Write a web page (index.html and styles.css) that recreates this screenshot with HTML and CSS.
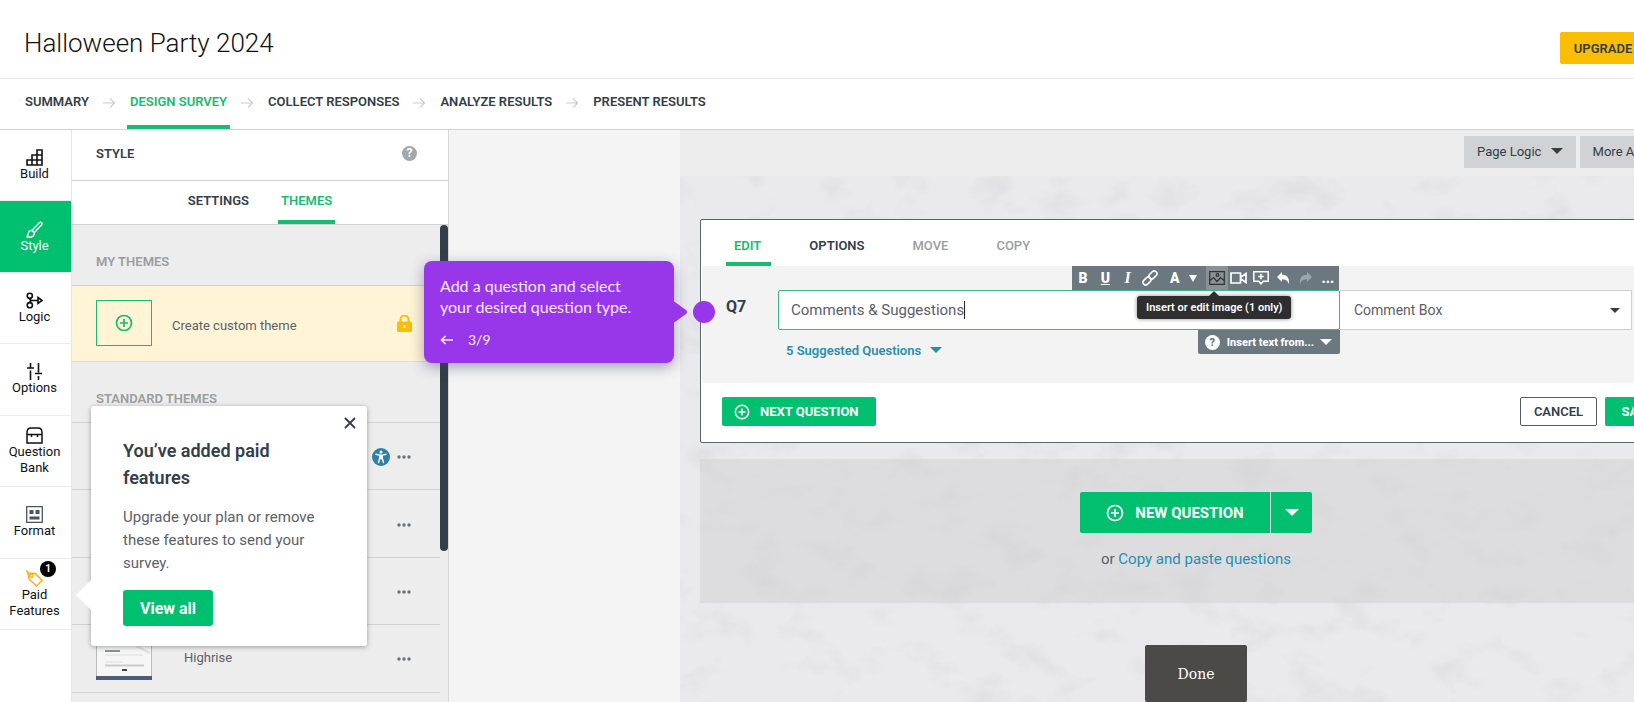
FILE: index.html
```html
<!DOCTYPE html>
<html lang="en">
<head>
<meta charset="utf-8">
<title>Halloween Party 2024</title>
<link rel="stylesheet" href="styles.css">
</head>
<body>
<svg class="defs" width="0" height="0" aria-hidden="true">
  <symbol id="plus-circle" viewBox="0 0 18 18"><circle cx="9" cy="9" r="7.5" fill="none" stroke="currentColor" stroke-width="1.7"/><path d="M9 5v8M5 9h8" stroke="currentColor" stroke-width="1.7"/></symbol>
  <symbol id="caret" viewBox="0 0 12 6"><path d="M0 0h12L6 6z" fill="currentColor"/></symbol>
  <symbol id="next" viewBox="0 0 14 12"><path d="M0 6h12M7.500 1l5 5-5 5" fill="none" stroke="currentColor" stroke-width="1.200"/></symbol>
  <symbol id="dots" viewBox="0 0 14 4"><circle cx="2" cy="2" r="1.700" fill="currentColor"/><circle cx="7" cy="2" r="1.700" fill="currentColor"/><circle cx="12" cy="2" r="1.700" fill="currentColor"/></symbol>
</svg>
<div class="app">
  <header class="topbar">
    <h1 class="survey-title">Halloween Party 2024</h1>
    <button class="upgrade">UPGRADE</button>
  </header>
  <nav class="steps" aria-label="Survey steps">
    <a class="step" href="#">SUMMARY</a>
    <svg class="step-arrow"><use href="#next"/></svg>
    <a class="step current" href="#">DESIGN SURVEY</a>
    <svg class="step-arrow"><use href="#next"/></svg>
    <a class="step" href="#">COLLECT RESPONSES</a>
    <svg class="step-arrow"><use href="#next"/></svg>
    <a class="step" href="#">ANALYZE RESULTS</a>
    <svg class="step-arrow"><use href="#next"/></svg>
    <a class="step" href="#">PRESENT RESULTS</a>
  </nav>

  <div class="body">
    <nav class="rail" aria-label="Design tools">
      <div class="rail-list">
      <a class="rail-item" href="#">
        <svg class="rail-icon" viewBox="0 0 17 17" fill="none" stroke="currentColor" stroke-width="1.600"><path d="M1 11h15v5H1zM6 6h10v10H6zM11 1h5v15h-5z"/></svg>
        <span>Build</span></a>
      <a class="rail-item active" href="#">
        <svg class="rail-icon" viewBox="0 0 17 17" fill="none" stroke="currentColor" stroke-width="1.400" stroke-linejoin="round"><path d="M6 9.500 13.500 1.600c1.500-1.200 3.300.6 2.200 2.100L8.200 11.800zM6 9.500c-2-.3-3.500.8-3.600 2.800-.1 1.500-.6 2.300-1.600 3.500 3 .8 6.600.4 7.300-2 .2-.7.200-1.300.1-2z"/></svg>
        <span>Style</span></a>
      <a class="rail-item" href="#">
        <svg class="rail-icon" viewBox="0 0 17 17" fill="none" stroke="currentColor" stroke-width="1.600"><circle cx="3.800" cy="3.800" r="2.600"/><circle cx="3.800" cy="13.200" r="2.600"/><path d="M3.800 6.400c0 1.400 1 2.100 2.800 2.100H12M3.800 10.600c0-1.400 1-2.100 2.800-2.100M12 5.500l4 3-4 3z"/></svg>
        <span>Logic</span></a>
      <a class="rail-item" href="#">
        <svg class="rail-icon" viewBox="0 0 17 17" fill="none" stroke="currentColor" stroke-width="1.600"><path d="M4.500 0v5M4.500 7.500V17M1 5h7M12.500 0v9.500M12.500 13v4M9 10.500h7"/></svg>
        <span>Options</span></a>
      <a class="rail-item" href="#">
        <svg class="rail-icon" viewBox="0 0 17 17" fill="none" stroke="currentColor" stroke-width="1.500"><path d="M1 16V5.500C1 2.500 3 1 5 1h7c2 0 4 1.500 4 4.500V16zM1 7.500h15M5.500 7.500V10M11.500 7.500V10"/></svg>
        <span>Question Bank</span></a>
      <a class="rail-item" href="#">
        <svg class="rail-icon slate" viewBox="0 0 17 17" fill="none" stroke="currentColor" stroke-width="1.300"><path d="M.7.7h15.600v15.600H.7z"/><path d="M3.500 4h4v4h-4zM9.500 4h4v4h-4zM3.500 10.500h10v3h-10z" fill="currentColor" stroke="none"/></svg>
        <span>Format</span></a>
      <a class="rail-item" href="#">
        <span class="tag-wrap">
          <svg class="rail-icon gold" viewBox="0 0 17 17" fill="none" stroke="currentColor" stroke-width="1.500" stroke-linejoin="round"><path d="M2 3l7.500.5 6.500 7-5.500 5.500L3 9zM0 .500l5 4.500"/><circle cx="5.500" cy="5.800" r="1.700"/></svg>
          <b class="badge">1</b>
        </span>
        <span>Paid Features</span></a>
      </div>
    </nav>

    <aside class="panel">
      <div class="panel-head"><h2 class="panel-title">STYLE</h2><button class="help" aria-label="Help">?</button></div>
      <div class="panel-tabs"><a class="ptab" href="#">SETTINGS</a><a class="ptab current" href="#">THEMES</a></div>
      <div class="panel-scroll">
        <div class="themes">
          <h3 class="group">MY THEMES</h3>
          <div class="custom">
            <button class="custom-add" aria-label="Add theme"><svg class="icon18"><use href="#plus-circle"/></svg></button>
            <span class="custom-name">Create custom theme</span>
            <svg class="lock" viewBox="0 0 15 17"><path d="M3.500 8V4.500a4 4 0 0 1 8 0V8" fill="none" stroke="#f9be00" stroke-width="2"/><rect y="6.500" width="15" height="10.500" rx="1.500" fill="#f9be00"/><path d="M7.500 10v3" stroke="#fff" stroke-width="1.500"/></svg>
          </div>
          <h3 class="group">STANDARD THEMES</h3>
          <div class="theme-list">
          <div class="theme">
            <svg class="access" viewBox="0 0 18 18"><circle cx="9" cy="9" r="9" fill="#2a7fab"/><circle cx="9" cy="4" r="1.500" fill="#fff"/><path d="M4 6.300l3.500.8h3l3.500-.8M7.700 7.200v3L6.500 14.500M10.300 7.200v3l1.200 4.300M9 7v4" fill="none" stroke="#fff" stroke-width="1.400" stroke-linecap="round"/></svg>
            <button class="more" aria-label="More"><svg class="dots"><use href="#dots"/></svg></button></div>
          <div class="theme"><button class="more" aria-label="More"><svg class="dots"><use href="#dots"/></svg></button></div>
          <div class="theme"><button class="more" aria-label="More"><svg class="dots"><use href="#dots"/></svg></button></div>
          <div class="theme">
            <svg class="thumb" viewBox="0 12 56 42"><path d="M.5 12.500h55v41H.500z" fill="#f6f6f6" stroke="#bbb"/><path d="M40 20l14 7" stroke="#e2e2e2" stroke-width="2"/><path d="M9 25h15" stroke="#8b90a0" stroke-width="2"/><path d="M9 29h38M9 36h18" stroke="#ddd"/><path d="M9 39.500h39" stroke="#ccc" stroke-width="2"/><path d="M26 44h5" stroke="#444" stroke-width="2"/><path d="M0 50h56v4H0z" fill="#4b5c80"/></svg>
            <span class="theme-name">Highrise</span>
            <button class="more" aria-label="More"><svg class="dots"><use href="#dots"/></svg></button></div>
          <div class="theme"></div>
          </div>
        </div>
        <div class="scroll-track"><div class="scroll-thumb"></div></div>
      </div>
    </aside>

    <main class="workspace">
      <div class="survey">
        <div class="page-bar">
          <button class="page-btn">Page Logic <svg class="caret12"><use href="#caret"/></svg></button>
          <button class="page-btn">More Actions <svg class="caret12"><use href="#caret"/></svg></button>
        </div>
        <div class="sheet">
          <svg class="concrete" aria-hidden="true">
            <filter id="smudge" x="0" y="0" width="100%" height="100%"><feTurbulence type="fractalNoise" baseFrequency="0.02 0.028" numOctaves="7" seed="21"/><feColorMatrix values="0 0 0 0 .64  0 0 0 0 .64  0 0 0 0 .66  1.200 0 0 0 -.620"/></filter>
            <rect width="100%" height="100%" filter="url(#smudge)"/>
          </svg>
          <section class="card">
            <div class="card-tabs"><a class="ctab current" href="#">EDIT</a><a class="ctab" href="#">OPTIONS</a><a class="ctab off" href="#">MOVE</a><a class="ctab off" href="#">COPY</a></div>
            <div class="editor">
              <label class="qnum" for="question">Q7</label>
              <div class="question">
                <div class="field"><input id="question" class="field-input" type="text" value="Comments &amp; Suggestions"><span class="cursor"></span></div>
                <div class="format-bar">
                  <button class="fmt bold" aria-label="Bold">B</button>
                  <button class="fmt bold under" aria-label="Underline">U</button>
                  <button class="fmt ital" aria-label="Italic">I</button>
                  <button class="fmt" aria-label="Link"><svg viewBox="0 0 16 16" width="16" height="16" fill="none" stroke="currentColor" stroke-width="1.600"><rect x="6.500" y="2.200" width="9" height="5.400" rx="2.700" transform="rotate(-45 11 5)"/><rect x=".500" y="8.300" width="9" height="5.400" rx="2.700" transform="rotate(-45 5 11)"/></svg></button>
                  <button class="fmt wide bold" aria-label="Text color">A <svg width="8" height="7" viewBox="0 0 8 7"><path d="M0 0h8L4 7z" fill="currentColor"/></svg></button>
                  <button class="fmt pressed" aria-label="Insert image"><svg viewBox="0 0 16 14" width="16" height="14" fill="none" stroke="currentColor" stroke-width="1.200"><path d="M.7.700h14.600v12.600H.700zM1 9.500l3.500-3 3.500 4 3.500-4 3.500 3"/><circle cx="8.500" cy="4" r="1.400"/></svg></button>
                  <button class="fmt" aria-label="Insert video"><svg viewBox="0 0 17 12" width="17" height="12" fill="none" stroke="currentColor" stroke-width="1.700"><path d="M1 1h9.500v10H1zM11 5l5-3.500v9L11 7"/></svg></button>
                  <button class="fmt" aria-label="Insert comment"><svg viewBox="0 0 16 14" width="16" height="14" fill="none" stroke="currentColor" stroke-width="1.500"><path d="M.8.800h14.400v9.400h-5L8 12.800l-2.200-2.600h-5zM8 2.800v5.400M5.300 5.500h5.400"/></svg></button>
                  <button class="fmt" aria-label="Undo"><svg viewBox="0 0 13 12" width="13" height="12"><path d="M5 0v2.800c5 0 7.500 3 7 9.200-1.500-3.500-3.500-4.800-7-4.800V10L0 5z" fill="currentColor"/></svg></button>
                  <button class="fmt dim" aria-label="Redo"><svg viewBox="0 0 13 12" width="13" height="12"><path d="M8 0v2.800c-5 0-7.500 3-7 9.200 1.500-3.500 3.500-4.800 7-4.800V10l5-5z" fill="currentColor"/></svg></button>
                  <button class="fmt bold" aria-label="More">...</button>
                </div>
                <div class="hint" role="tooltip">Insert or edit image (1 only)</div>
                <button class="insert-text"><span class="q">?</span>Insert text from...<svg class="caret12"><use href="#caret"/></svg></button>
                <button class="suggested">5 Suggested Questions <svg class="caret12"><use href="#caret"/></svg></button>
              </div>
              <div class="type"><select class="type-select" aria-label="Question type"><option>Comment Box</option></select><svg class="type-caret"><use href="#caret"/></svg></div>
            </div>
            <div class="card-foot">
              <button class="next-q"><svg class="icon16"><use href="#plus-circle"/></svg>NEXT QUESTION</button>
              <button class="cancel">CANCEL</button>
              <button class="save">SAVE</button>
            </div>
          </section>
          <section class="add-zone">
            <div class="split"><button class="new-q"><svg class="icon18"><use href="#plus-circle"/></svg>NEW QUESTION</button><button class="new-more" aria-label="Question types"><svg class="caret14"><use href="#caret"/></svg></button></div>
            <p class="copy-line">or <a class="copy-link" href="#">Copy and paste questions</a></p>
          </section>
          <button class="done">Done</button>
        </div>
      </div>
    </main>
  </div>

  <div class="paid-pop" role="dialog" aria-labelledby="paid-title">
    <button class="pop-close" aria-label="Close"><svg width="12" height="12" viewBox="0 0 12 12"><path d="M1 1l10 10M11 1L1 11" stroke="currentColor" stroke-width="1.800"/></svg></button>
    <h2 id="paid-title" class="pop-title">You’ve added paid features</h2>
    <p class="pop-text">Upgrade your plan or remove these features to send your survey.</p>
    <button class="view-all">View all</button>
  </div>
  <div class="tour" role="dialog" aria-label="Tour">
    <p class="tour-text">Add a question and select<br>your desired question type.</p>
    <div class="tour-nav"><button class="tour-back" aria-label="Back"><svg width="13" height="10" viewBox="0 0 13 10"><path d="M13 5H1.500M5.500 1l-4 4 4 4" fill="none" stroke="currentColor" stroke-width="1.600"/></svg></button><span>3/9</span></div>
    <svg class="tour-tip" viewBox="0 0 14 22"><path d="M0 0l12.500 9q2 2 0 4L0 22z" fill="#9837ea"/></svg>
    <span class="tour-dot"></span>
  </div>
</div>
</body>
</html>
```
FILE: styles.css
```css
* { box-sizing: border-box; }
body { margin: 0; background: #fff; color: #333e48; font-family: Roboto, "Liberation Sans", sans-serif; font-size: 13px; overflow: hidden; }
button { font: inherit; color: inherit; background: none; border: 0; padding: 0; margin: 0; }
a { color: inherit; text-decoration: none; }
h1, h2, h3, p { margin: 0; }
.defs { position: absolute; }
.app { position: relative; display: flex; flex-direction: column; min-width: 1712px; height: 100vh; overflow: hidden; }

.topbar { display: flex; flex: none; justify-content: space-between; align-items: flex-end; height: 79px; padding: 0 64px 14px 24px; border-bottom: 1px solid #ececec; }
.survey-title { padding-bottom: 4px; font-size: 26px; line-height: 34px; font-weight: 300; color: #111; }
.upgrade { width: 88px; height: 32px; padding-right: 2px; border-radius: 2px; background: #f9be00; font-weight: 600; }

.steps { display: flex; flex: none; align-items: stretch; gap: 11px; height: 51px; padding: 0 22px; border-bottom: 1px solid #d0d2d3; }
.step { padding: 0 3px; font-weight: 600; line-height: 46px; }
.step.current, .ptab.current, .ctab.current { color: #18bb70; border-bottom: 4px solid #18bb70; }
.step-arrow { align-self: center; width: 13px; height: 12px; margin-bottom: 2px; color: #cbcbcb; }

.body { display: flex; flex: 1; min-height: 0; }
.rail { flex: none; width: 72px; border-right: 1px solid #e6e6e6; }
.rail-list { display: grid; grid-auto-rows: 1fr; min-height: 500px; }
.rail-item { display: flex; flex-direction: column; align-items: center; justify-content: center; padding: 1px 6px 0 4px; border-bottom: 1px solid #ededed; color: #111; line-height: 16px; text-align: center; }
.rail-item.active { background: #00bf6f; color: #fff; }
.rail-icon { width: 17px; height: 17px; }
.slate { color: #4a5560; }
.gold { display: block; color: #fbb11b; }
.tag-wrap { position: relative; }
.badge { position: absolute; left: 14px; top: -9px; width: 16px; height: 16px; border-radius: 50%; background: #000; color: #fff; font-size: 10px; line-height: 16px; }

.panel { display: flex; flex-direction: column; flex: none; width: 377px; border-right: 1px solid #d6d8d9; }
.panel-head { display: flex; align-items: center; justify-content: space-between; height: 51px; padding: 0 31px 3px 24px; border-bottom: 1px solid #cfd1d2; }
.panel-title { font-size: 13px; font-weight: 600; }
.help { width: 15px; height: 15px; border-radius: 50%; background: #a3a7a9; color: #fff; font-size: 12px; font-weight: 700; line-height: 15px; }
.panel-tabs { display: flex; justify-content: center; gap: 26px; height: 44px; border-bottom: 1px solid #d0d2d3; }
.ptab { padding: 0 3px; font-weight: 600; line-height: 40px; }
.panel-scroll { display: flex; flex: 1; min-height: 0; background: #ededed; }
.themes { flex: 1; overflow: hidden; }
.group { display: flex; align-items: flex-end; height: 61px; padding: 0 24px 15px; border-bottom: 1px solid #cfd1d2; color: #9a9da0; font-size: 13px; font-weight: 600; line-height: 16px; }
.custom { display: flex; align-items: center; height: 76px; padding: 0 28px 0 24px; background: #fff4d6; border-bottom: 1px solid #dcdcdc; color: #5b6066; }
.custom-add { display: grid; place-items: center; width: 56px; height: 46px; margin-bottom: 2px; border: 1px solid #18bb70; color: #18bb70; }
.custom-name { flex: 1; padding: 4px 0 0 20px; }
.lock { width: 15px; height: 17px; }
.icon18 { width: 18px; height: 18px; }
.icon16 { width: 16px; height: 16px; }
.theme-list { display: grid; grid-auto-rows: 1fr; height: 337px; }
.theme { display: flex; align-items: center; justify-content: flex-end; gap: 7px; padding: 2px 29px 0 24px; border-bottom: 1px solid #cfd1d2; color: #5b6066; }
.access { width: 18px; height: 18px; }
.more { display: flex; }
.dots { width: 14px; height: 4px; color: #6b7075; }
.thumb { width: 56px; height: 42px; }
.theme-name { flex: 1; padding: 0 0 4px 25px; }
.scroll-track { width: 8px; }
.scroll-thumb { height: 326px; border-radius: 4px; background: #333e48; }

.workspace { flex: 1; min-width: 0; padding-left: 231px; background: #f4f4f4; }
.survey { display: flex; flex-direction: column; height: 100%; }
.page-bar { display: flex; flex: none; justify-content: flex-end; gap: 4px; height: 46px; padding: 6px 8px; background: #ededed; }
.page-btn { height: 32px; padding: 0 13px; background: #d0d2d3; line-height: 32px; }
.caret12 { width: 12px; height: 6px; margin: 0 0 2px 6px; }
.caret14 { width: 14px; height: 7px; }
.sheet { position: relative; display: flex; flex: 1; flex-direction: column; align-items: center; padding: 43px 20px 0; background: #eae9ed; }
.concrete { position: absolute; inset: 0; width: 100%; height: 100%; }

.card { position: relative; z-index: 1; width: 100%; padding: 0 1px; border: 1px solid #5f636b; border-radius: 2px; background: #fff; }
.card-tabs { display: flex; gap: 30px; height: 46px; padding: 0 24px; }
.ctab { padding: 9px 10px 0 8px; font-weight: 600; line-height: 33px; }
.ctab.off { color: #9a9da0; font-weight: 500; }
.editor { display: flex; height: 117px; padding: 24px 58px 0 24px; background: #f3f3f3; }
.qnum { width: 52px; font-size: 16px; font-weight: 700; line-height: 34px; }
.question { position: relative; flex: none; width: 562px; }
.field { display: flex; align-items: center; height: 40px; padding: 0 12px; border: 1px solid #35b883; border-radius: 2px; background: #fff; }
.field-input { field-sizing: content; padding: 0; border: 0; outline: 0; background: none; color: #5b6066; font: 15px/20px Roboto, sans-serif; }
.cursor { width: 1px; height: 18px; background: #222; }
.format-bar { position: absolute; right: 1px; top: -24px; display: flex; width: 267px; height: 24px; background: #6b787f; color: #fff; }
.fmt { display: flex; flex: 1; align-items: center; justify-content: center; gap: 9px; font-size: 14px; }
.fmt.wide { flex: 2; }
.bold { font-weight: 900; }
.under { text-decoration: underline; }
.ital { font-family: "Liberation Serif", serif; font-size: 16px; font-style: italic; font-weight: 700; }
.pressed { background: #8a9194; color: #333; }
.dim { color: #9ca5aa; }
.hint { position: absolute; left: 359px; top: 6px; padding: 0 9px; border-radius: 3px; background: #2e2e2e; color: #fff; font-size: 11px; font-weight: 600; line-height: 23px; white-space: nowrap; box-shadow: 0 0 4px #888; }
.hint::before { content: ""; position: absolute; left: 50%; top: -5px; margin-left: -5px; border: 5px solid transparent; border-top: 0; border-bottom-color: #2e2e2e; }
.insert-text { position: absolute; right: 0; top: 40px; display: flex; align-items: center; height: 24px; padding: 0 8px 0 7px; border-radius: 0 0 2px 2px; background: #6b787f; color: #fff; font-size: 11px; font-weight: 800; }
.insert-text .caret12 { margin-bottom: 0; }
.q { width: 15px; height: 15px; margin-right: 7px; border-radius: 50%; background: #fff; color: #6b787f; line-height: 15px; }
.suggested { padding: 12px 8px; color: #2a8db0; font-weight: 600; line-height: 18px; }
.type { position: relative; flex: 1; }
.type-select { width: 100%; height: 40px; padding: 0 14px; appearance: none; border: 1px solid #cfd1d2; border-left: 0; border-radius: 0; background: #fff; color: #5b6066; font: 14px Roboto, sans-serif; }
.type-caret { position: absolute; right: 12px; top: 18px; width: 10px; height: 5px; pointer-events: none; }
.card-foot { display: flex; align-items: center; gap: 8px; height: 59px; padding: 0 20px 2px; }
.next-q { display: flex; align-items: center; gap: 10px; height: 29px; margin-right: auto; padding: 0 17px 0 12px; border-radius: 2px; background: #00bf6f; color: #fff; font-weight: 700; }
.cancel { width: 77px; height: 29px; border: 1px solid #555b62; border-radius: 2px; font-weight: 600; }
.save { width: 65px; height: 29px; border-radius: 2px; background: #00bf6f; color: #fff; font-weight: 700; }

.add-zone { position: relative; z-index: 1; display: flex; flex-direction: column; align-items: center; gap: 15px; width: 100%; height: 144px; margin-top: 16px; padding-top: 33px; background: rgb(208 208 208 / 50%); }
.split { display: flex; gap: 1px; height: 41px; }
.new-q, .new-more { display: flex; align-items: center; justify-content: center; gap: 11px; width: 190px; border-radius: 2px 0 0 2px; background: #00bf6f; color: #fff; font-size: 15px; font-weight: 700; }
.new-more { width: 41px; border-radius: 0 2px 2px 0; }
.copy-line { color: #5b6066; font-size: 15px; line-height: 22px; }
.copy-link { color: #2a8db0; }
.done { position: relative; z-index: 1; width: 102px; height: 57px; margin-top: 42px; border-radius: 2px; background: #4b4a46; color: #fff; font: 14px "DejaVu Serif", serif; }

.paid-pop { position: absolute; left: 91px; top: 406px; width: 276px; height: 240px; padding: 31px 32px 20px; border-radius: 3px; background: #fff; box-shadow: 0 1px 5px rgb(0 0 0 / 35%); }
.paid-pop::before { content: ""; position: absolute; left: -15px; top: 174px; border: 15px solid transparent; border-left: 0; border-right-color: #fff; }
.pop-close { position: absolute; right: 11px; top: 11px; display: flex; }
.pop-title { font-size: 18px; font-weight: 600; line-height: 27px; }
.pop-text { margin-top: 15px; color: #5b6066; font-size: 15px; line-height: 23px; }
.view-all { width: 90px; height: 36px; margin-top: 15px; border-radius: 3px; background: #00bf6f; color: #fff; font-size: 16px; font-weight: 700; }

.tour { position: absolute; z-index: 2; left: 424px; top: 261px; width: 250px; height: 102px; padding: 14px 16px; border-radius: 8px; background: #9837ea; color: #f6e9ff; box-shadow: 0 4px 14px rgb(60 60 110 / 45%); font: 16px/21px Lato, sans-serif; }
.tour-text { white-space: nowrap; }
.tour-nav { display: flex; align-items: center; gap: 15px; margin-top: 12px; font-size: 14px; }
.tour-back { display: flex; }
.tour-tip { position: absolute; left: 249px; top: 40px; width: 15px; height: 22px; }
.tour-dot { position: absolute; left: 269px; top: 40px; width: 22px; height: 22px; border-radius: 50%; background: #9837ea; }
```
